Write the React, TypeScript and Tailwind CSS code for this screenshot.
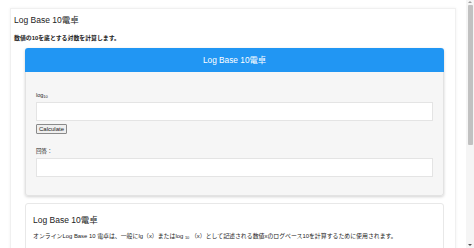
const font = { fontFamily: '"Liberation Sans", "Noto Sans CJK JP", sans-serif' };

export default function App() {
  return (
    <div className="flex h-[248px] w-[474px] overflow-hidden bg-white text-[#222]" style={font}>
      <div className="w-[456px] shrink-0 pl-[10px] pt-[8px]">
        <div className="h-[260px] border border-[#f0f0f0] bg-white pl-[3px] pt-[5px] shadow-[0_0_3px_rgba(0,0,0,0.06)]">
          <h1 className="text-[8.5px] leading-[12px] font-normal">Log Base 10電卓</h1>
          <p className="mt-[8px] text-[5.9px] leading-[8px] font-bold">数値の10を底とする対数を計算します。</p>

          <div className="mt-[6px] ml-[11px] mr-[11px]">
            <div className="rounded-[3px] shadow-[0_1px_3px_rgba(0,0,0,0.18)]">
              <div className="flex h-[24px] items-center justify-center rounded-t-[3px] bg-[#2196f3] text-[8.3px] text-white">
                Log Base 10電卓
              </div>
              <div className="rounded-b-[3px] border border-t-0 border-[#e3e3e3] bg-[#f6f6f6] px-[10px] pt-[19px] pb-[18px]">
                <label className="block text-[5.5px] leading-[8px]">
                  log<sub className="text-[4px]">10</sub>
                </label>
                <input className="mt-[3px] block h-[19px] w-full border border-[#e4e4e4] bg-white" />
                <button className="mt-[3px] block h-[10px] rounded-[1px] border border-[#8a8a8a] bg-[#efefef] px-[2px] text-[6px] leading-[8px]">
                  Calculate
                </button>
                <label className="mt-[13px] block text-[5.5px] leading-[8px]">回答：</label>
                <input className="mt-[3px] block h-[19px] w-full border border-[#e4e4e4] bg-white" />
              </div>
            </div>

            <div className="mt-[7px] h-[60px] rounded-[3px] border border-[#e8e8e8] bg-white px-[7px] pt-[10px]">
              <h2 className="text-[8.5px] leading-[12px] font-normal">Log Base 10電卓</h2>
              <p className="mt-[6px] text-[5.9px] leading-[8px]">
                オンラインLog Base 10 電卓は、一般にlg（x）またはlog <sub className="text-[4px]">10</sub> （x）として記述される数値xのログベース10を計算するために使用されます。
              </p>
            </div>
          </div>
        </div>
      </div>
      <div className="ml-[10px] flex w-[8px] shrink-0 flex-col items-center bg-[#f5f5f5]">
        <div className="mt-[1px] h-0 w-0 border-x-[2px] border-b-[2px] border-x-transparent border-b-[#a0a0a0]" />
        <div className="mt-[2px] h-[140px] w-[5px] rounded-[1px] bg-[#c1c1c1]" />
        <div className="flex-1" />
        <div className="mb-[2px] h-0 w-0 border-x-[2px] border-t-[2px] border-x-transparent border-t-[#505050]" />
      </div>
    </div>
  );
}
